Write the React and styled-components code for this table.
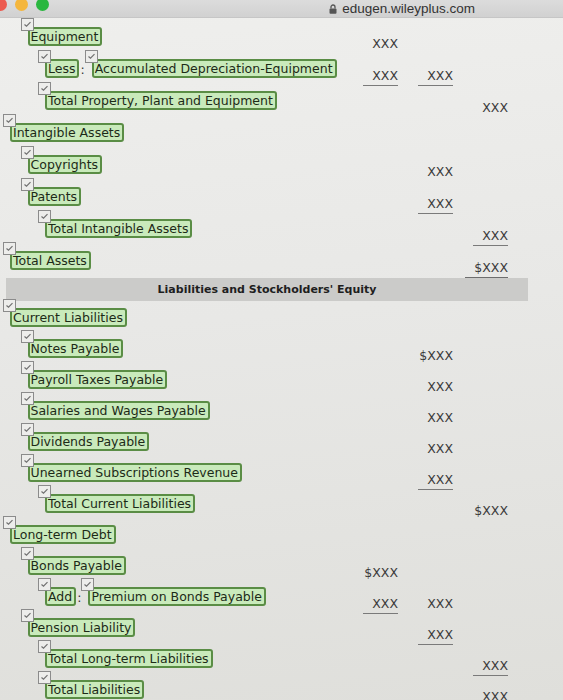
import React from "react";
import styled, { createGlobalStyle } from "styled-components";

const Global = createGlobalStyle`
  html, body { margin: 0; padding: 0; }
  body {
    width: 563px;
    height: 700px;
    overflow: hidden;
    background: linear-gradient(175deg, #efefed 0%, #e8e8e6 45%, #dfdfdb 100%);
    font-family: "DejaVu Sans", Verdana, sans-serif;
    color: #222;
  }
`;

const Page = styled.div`
  width: 563px;
  height: 700px;
  display: flex;
  flex-direction: column;
`;

const TitleBar = styled.div`
  height: 18px;
  flex: none;
  display: flex;
  align-items: center;
  background: linear-gradient(#dcdcdc, #d1d1d1);
  border-bottom: 1px solid #c6c6c6;
  box-sizing: border-box;
  overflow: hidden;
`;

const Lights = styled.div`
  display: flex;
  gap: 8px;
  margin-left: -6px;
  margin-top: -8px;
`;

const Light = styled.span`
  width: 13px;
  height: 13px;
  border-radius: 50%;
  background: ${(p) => p.$c};
`;

const Url = styled.div`
  margin-left: auto;
  margin-right: 88px;
  display: flex;
  align-items: center;
  gap: 5px;
  font-family: "Liberation Sans", Arial, sans-serif;
  font-size: 13.5px;
  color: #333;
  line-height: 16px;
`;

const Section = styled.div`
  display: flex;
  flex-direction: column;
  margin-top: ${(p) => p.$mt || 0}px;
`;

const Row = styled.div`
  display: grid;
  grid-template-columns: 1fr 57px 55px 55px;
  padding-right: 55px;
  height: ${(p) => p.$h}px;
  flex: none;
`;

const LabelCell = styled.div`
  display: flex;
  align-items: flex-start;
  padding-left: ${(p) => 3 + p.$level * 17.5}px;
  white-space: nowrap;
`;

const Item = styled.div`
  position: relative;
  padding: 8px 0 0 7px;
`;

const Box = styled.span`
  position: absolute;
  left: 0;
  top: 0;
  width: 13px;
  height: 13px;
  box-sizing: border-box;
  border: 1px solid #8b8b8b;
  background: #ededeb;
  display: flex;
  align-items: flex-start;
  justify-content: center;
`;

const Pill = styled.span`
  display: inline-block;
  box-sizing: border-box;
  height: 19px;
  line-height: 15px;
  padding: 0 2px 0 1px;
  font-size: 12.5px;
  color: #1d2a18;
  background: #c9eabb;
  border: 2px solid #5a8d45;
  border-radius: 3px;
`;

const Colon = styled.span`
  font-size: 12.5px;
  line-height: 15px;
  padding-top: 12px;
  margin: 0 0 0 1px;
  color: #333;
`;

const AmountCell = styled.div`
  grid-column: ${(p) => p.$col + 1};
  grid-row: 1;
  text-align: right;
  padding-top: 15px;
`;

const Amount = styled.span`
  display: inline-block;
  font-size: 12.5px;
  line-height: 16px;
  color: #3a3a3a;
  padding-left: ${(p) => (p.$u ? 9 : 0)}px;
  padding-bottom: 1px;
  border-bottom: ${(p) =>
    p.$u === 2 ? "3px double #6d6d6d" : p.$u ? "1px solid #7a7a7a" : "none"};
`;

const Header = styled.div`
  margin: 4px 35px 0 6px;
  height: 23px;
  flex: none;
  background: #cbcbc9;
  display: flex;
  align-items: center;
  justify-content: center;
  font-weight: bold;
  font-size: 11px;
  color: #1e1e1e;
`;

const Check = () => (
  <svg width="9" height="7" viewBox="0 0 9 7" style={{ marginTop: 2 }}>
    <polyline points="1.5,3.5 3.5,5.2 7.5,1.2" fill="none" stroke="#707070" strokeWidth="1.2" />
  </svg>
);

const Lock = () => (
  <svg width="8" height="10" viewBox="0 0 8 10">
    <path d="M2 4.5V3a2 2 0 0 1 4 0v1.5" fill="none" stroke="#555" strokeWidth="1.3" />
    <rect x="0.5" y="4.5" width="7" height="5.2" rx="1" fill="#555" />
  </svg>
);

const top = [
  { level: 1, labels: ["Equipment"], amounts: [{ col: 1, v: "XXX" }] },
  { level: 2, labels: ["Less", "Accumulated Depreciation-Equipment"], amounts: [{ col: 1, v: "XXX", u: 1 }, { col: 2, v: "XXX", u: 1 }] },
  { level: 2, labels: ["Total Property, Plant and Equipment"], amounts: [{ col: 3, v: "XXX" }] },
  { level: 0, labels: ["Intangible Assets"] },
  { level: 1, labels: ["Copyrights"], amounts: [{ col: 2, v: "XXX" }] },
  { level: 1, labels: ["Patents"], amounts: [{ col: 2, v: "XXX", u: 1 }] },
  { level: 2, labels: ["Total Intangible Assets"], amounts: [{ col: 3, v: "XXX", u: 1 }] },
  { level: 0, labels: ["Total Assets"], amounts: [{ col: 3, v: "$XXX", u: 2 }] },
];

const bottom = [
  { level: 0, labels: ["Current Liabilities"] },
  { level: 1, labels: ["Notes Payable"], amounts: [{ col: 2, v: "$XXX" }] },
  { level: 1, labels: ["Payroll Taxes Payable"], amounts: [{ col: 2, v: "XXX" }] },
  { level: 1, labels: ["Salaries and Wages Payable"], amounts: [{ col: 2, v: "XXX" }] },
  { level: 1, labels: ["Dividends Payable"], amounts: [{ col: 2, v: "XXX" }] },
  { level: 1, labels: ["Unearned Subscriptions Revenue"], amounts: [{ col: 2, v: "XXX", u: 1 }] },
  { level: 2, labels: ["Total Current Liabilities"], amounts: [{ col: 3, v: "$XXX" }] },
  { level: 0, labels: ["Long-term Debt"] },
  { level: 1, labels: ["Bonds Payable"], amounts: [{ col: 1, v: "$XXX" }] },
  { level: 2, labels: ["Add", "Premium on Bonds Payable"], amounts: [{ col: 1, v: "XXX", u: 1 }, { col: 2, v: "XXX" }] },
  { level: 1, labels: ["Pension Liability"], amounts: [{ col: 2, v: "XXX", u: 1 }] },
  { level: 2, labels: ["Total Long-term Liabilities"], amounts: [{ col: 3, v: "XXX", u: 1 }] },
  { level: 2, labels: ["Total Liabilities"], amounts: [{ col: 3, v: "XXX" }] },
];

const LineRow = ({ row, h }) => (
  <Row $h={h}>
    <LabelCell $level={row.level}>
      {row.labels.map((l, i) => (
        <React.Fragment key={l}>
          {i > 0 && <Colon>:</Colon>}
          <Item>
            <Box>
              <Check />
            </Box>
            <Pill>{l}</Pill>
          </Item>
        </React.Fragment>
      ))}
    </LabelCell>
    {(row.amounts || []).map((a) => (
      <AmountCell key={a.col} $col={a.col}>
        <Amount $u={a.u}>{a.v}</Amount>
      </AmountCell>
    ))}
  </Row>
);

export default function App() {
  return (
    <Page>
      <Global />
      <TitleBar>
        <Lights>
          <Light $c="#ec5b50" />
          <Light $c="#f4b63c" />
          <Light $c="#2ab73f" />
        </Lights>
        <Url>
          <Lock />
          edugen.wileyplus.com
        </Url>
      </TitleBar>
      <Section>
        {top.map((r, i) => (
          <LineRow key={i} row={r} h={32} />
        ))}
      </Section>
      <Header>Liabilities and Stockholders' Equity</Header>
      <Section $mt={-2}>
        {bottom.map((r, i) => (
          <LineRow key={i} row={r} h={31} />
        ))}
      </Section>
    </Page>
  );
}
